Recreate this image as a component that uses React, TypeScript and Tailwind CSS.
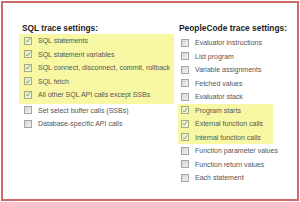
import React from 'react';

type Item = { label: string; checked: boolean };

const sqlHighlighted: Item[] = [
  { label: 'SQL statements', checked: true },
  { label: 'SQL statement variables', checked: true },
  { label: 'SQL connect, disconnect, commit, rollback', checked: true },
  { label: 'SQL fetch', checked: true },
  { label: 'All other SQL API calls except SSBs', checked: true },
];

const sqlRest: Item[] = [
  { label: 'Set select buffer calls (SSBs)', checked: false },
  { label: 'Database-specific API calls', checked: false },
];

const pcTop: Item[] = [
  { label: 'Evaluator instructions', checked: false },
  { label: 'List program', checked: false },
  { label: 'Variable assignments', checked: false },
  { label: 'Fetched values', checked: false },
  { label: 'Evaluator stack', checked: false },
];

const pcHighlighted: Item[] = [
  { label: 'Program starts', checked: true },
  { label: 'External function calls', checked: true },
  { label: 'Internal function calls', checked: true },
];

const pcRest: Item[] = [
  { label: 'Function parameter values', checked: false },
  { label: 'Function return values', checked: false },
  { label: 'Each statement', checked: false },
];

function Box({ checked }: { checked: boolean }) {
  return (
    <span
      className={`w-[8px] h-[8px] shrink-0 border flex items-center justify-center ${
        checked
          ? 'border-[#a8ad7c] bg-gradient-to-br from-[#e6ead0] to-[#f7f8e4]'
          : 'border-[#a6a6a6] bg-gradient-to-br from-[#d4d4d4] to-[#f3f3f3]'
      }`}
    >
      {checked && (
        <svg viewBox="0 0 8 8" className="w-[7px] h-[7px]">
          <path d="M1.3 4.2 L3.1 6.1 L6.6 1.2" fill="none" stroke="#6a9a3c" strokeWidth="1.2" />
        </svg>
      )}
    </span>
  );
}

function Row({ item, pad }: { item: Item; pad: string }) {
  return (
    <div className={`h-[13.5px] flex items-center ${pad}`}>
      <Box checked={item.checked} />
      <span className="ml-[6px] text-[7px] leading-none text-[#555] whitespace-nowrap">{item.label}</span>
    </div>
  );
}

export default function App() {
  return (
    <div className="w-[300px] h-[202px] bg-white" style={{ fontFamily: '"Liberation Sans", Arial, sans-serif' }}>
      <div className="ml-[1px] mt-[1px] w-[298px] h-[200px] border-2 border-[#d06a68] flex">
        {/* SQL column */}
        <div className="ml-[16px] w-[159px] pt-[20px]">
          <h3 className="pl-[3px] h-[11px] text-[8.3px] font-bold leading-[11px] text-[#222] whitespace-nowrap">
            SQL trace settings:
          </h3>
          <div className="mt-[0px] w-[155px] bg-[#f8f8a4] pb-[2px]">
            {sqlHighlighted.map((it) => (
              <Row key={it.label} item={it} pad="pl-[5px]" />
            ))}
          </div>
          {sqlRest.map((it) => (
            <Row key={it.label} item={it} pad="pl-[5px]" />
          ))}
        </div>

        {/* PeopleCode column */}
        <div className="w-[100px] pt-[20px]">
          <h3 className="pl-[1px] h-[11px] text-[8.4px] font-bold leading-[11px] text-[#222] whitespace-nowrap">
            PeopleCode trace settings:
          </h3>
          <div className="mt-[2px]">
            {pcTop.map((it) => (
              <Row key={it.label} item={it} pad="pl-[3px]" />
            ))}
          </div>
          <div className="w-[95px] bg-[#f8f8a4]">
            {pcHighlighted.map((it) => (
              <Row key={it.label} item={it} pad="pl-[3px]" />
            ))}
          </div>
          {pcRest.map((it) => (
            <Row key={it.label} item={it} pad="pl-[3px]" />
          ))}
        </div>
      </div>
    </div>
  );
}
